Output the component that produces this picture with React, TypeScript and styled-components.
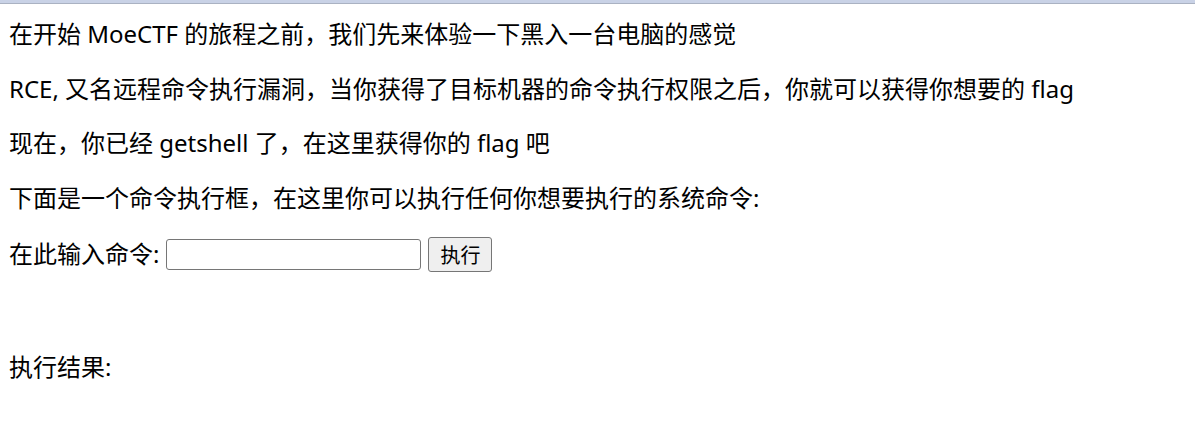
import React from 'react';
import styled, { createGlobalStyle } from 'styled-components';

const GlobalStyle = createGlobalStyle`
  html, body {
    margin: 0;
    padding: 0;
    background: #ffffff;
  }
  body {
    font-family: "Noto Sans", "Noto Sans CJK SC", sans-serif;
    color: #000000;
  }
`;

const TopEdge = styled.div`
  height: 3px;
  background: #c9d2e6;
  border-bottom: 1px solid #aab2c2;
`;

const Content = styled.main`
  display: flex;
  flex-direction: column;
  padding: 15px 8px 0 9px;
  font-size: 24px;
`;

const Line = styled.p<{ $gap?: number }>`
  margin: ${(p) => p.$gap ?? 0}px 0 0;
  line-height: 30.5px;
  white-space: nowrap;
`;

const CommandForm = styled.form`
  display: flex;
  align-items: center;
  margin-top: 23.5px;
  height: 35px;
`;

const Label = styled.label`
  line-height: 30.5px;
  margin-right: 7px;
`;

const CommandInput = styled.input`
  box-sizing: border-box;
  width: 255px;
  height: 31px;
  border: 1px solid #767676;
  border-radius: 3px;
  padding: 1px 3px;
  font-size: 20px;
  background: #ffffff;
  outline: none;
`;

const RunButton = styled.button`
  box-sizing: border-box;
  margin-left: 7px;
  width: 64px;
  height: 35px;
  border: 1px solid #767676;
  border-radius: 3px;
  background: #efefef;
  font-family: "Noto Sans CJK SC", sans-serif;
  font-size: 20px;
  color: #000000;
  padding: 0;
`;

export default function App() {
  return (
    <>
      <GlobalStyle />
      <TopEdge />
      <Content>
        <Line>在开始 MoeCTF 的旅程之前，我们先来体验一下黑入一台电脑的感觉</Line>
        <Line $gap={24}>
          RCE, 又名远程命令执行漏洞，当你获得了目标机器的命令执行权限之后，你就可以获得你想要的 flag
        </Line>
        <Line $gap={24}>现在，你已经 getshell 了，在这里获得你的 flag 吧</Line>
        <Line $gap={24}>下面是一个命令执行框，在这里你可以执行任何你想要执行的系统命令:</Line>
        <CommandForm onSubmit={(e) => e.preventDefault()}>
          <Label htmlFor="cmd">在此输入命令:</Label>
          <CommandInput id="cmd" name="cmd" type="text" />
          <RunButton type="submit">执行</RunButton>
        </CommandForm>
        <Line $gap={80.75}>执行结果:</Line>
      </Content>
    </>
  );
}
